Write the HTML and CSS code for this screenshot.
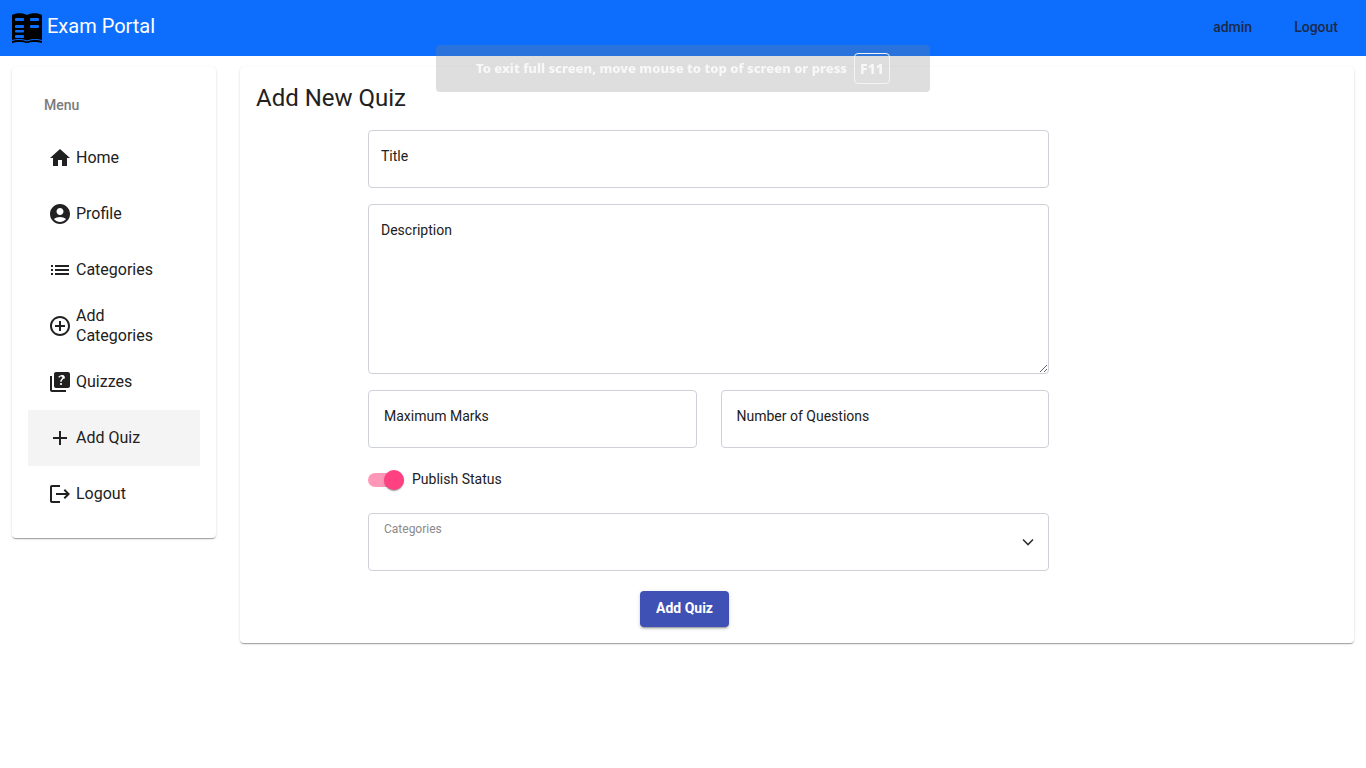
FILE: index.html
```html
<!DOCTYPE html>
<html lang="en">
<head>
    <meta charset="UTF-8">
    <meta name="viewport" content="width=device-width, initial-scale=1.0">
    <title>Exam Portal</title>
    <link rel="stylesheet" href="styles.css">
</head>
<body>
    <header class="navbar">
        <a class="brand" href="#">
            <svg class="brand-logo" viewBox="0 0 30 30" width="30" height="30">
                <path fill="#000" d="M0 2C4 -.5 11 -.5 15 2C19 -.5 26 -.5 30 2V30C26 28.5 19 28.5 15 30C11 28.5 4 28.5 0 30Z"/>
                <path fill="none" stroke="#0d6efd" stroke-width="1" d="M0 27.5C4 26 11 26 15 28C19 26 26 26 30 27.5"/>
                <g fill="#0d6efd">
                    <rect x="3" y="5" width="9" height="3" rx="1"/>
                    <rect x="3" y="12" width="9" height="3" rx="1"/>
                    <rect x="3" y="17" width="9" height="2.5" rx="1"/>
                    <rect x="3" y="22" width="9" height="3" rx="1"/>
                    <rect x="18" y="5" width="9" height="3" rx="1"/>
                    <rect x="18" y="12" width="9" height="3" rx="1"/>
                </g>
            </svg>
            <span class="brand-name">Exam Portal</span>
        </a>
        <nav class="nav-links">
            <a href="#">admin</a>
            <a href="#">Logout</a>
        </nav>
    </header>

    <div class="fullscreen-toast">
        <span class="toast-text">To exit full screen, move mouse to top of screen or press</span>
        <kbd>F11</kbd>
    </div>

    <div class="page">
        <aside class="card sidebar">
            <div class="menu-title">Menu</div>
            <a class="menu-item" href="#">
                <svg class="icon" viewBox="0 0 24 24"><path d="M10 20v-6h4v6h5v-8h3L12 3 2 12h3v8z"/></svg>
                <span>Home</span>
            </a>
            <a class="menu-item" href="#">
                <svg class="icon" viewBox="0 0 24 24"><path d="M12 2C6.48 2 2 6.48 2 12s4.48 10 10 10 10-4.48 10-10S17.52 2 12 2zm0 4c1.93 0 3.5 1.57 3.5 3.5S13.93 13 12 13s-3.5-1.57-3.5-3.5S10.07 6 12 6zm0 14c-2.03 0-4.43-.82-6.14-2.88C7.55 15.8 9.68 15 12 15s4.45.8 6.14 2.12C16.43 19.18 14.03 20 12 20z"/></svg>
                <span>Profile</span>
            </a>
            <a class="menu-item" href="#">
                <svg class="icon" viewBox="0 0 24 24"><path d="M3 13h2v-2H3v2zm0 4h2v-2H3v2zm0-8h2V7H3v2zm4 4h14v-2H7v2zm0 4h14v-2H7v2zM7 7v2h14V7H7z"/></svg>
                <span>Categories</span>
            </a>
            <a class="menu-item" href="#">
                <svg class="icon" viewBox="0 0 24 24"><path d="M13 7h-2v4H7v2h4v4h2v-4h4v-2h-4V7zm-1-5C6.48 2 2 6.48 2 12s4.48 10 10 10 10-4.48 10-10S17.52 2 12 2zm0 18c-4.41 0-8-3.59-8-8s3.59-8 8-8 8 3.59 8 8-3.59 8-8 8z"/></svg>
                <span>Add Categories</span>
            </a>
            <a class="menu-item" href="#">
                <svg class="icon" viewBox="0 0 24 24"><path d="M4 6H2v14c0 1.1.9 2 2 2h14v-2H4V6zm16-4H8c-1.1 0-2 .9-2 2v12c0 1.1.9 2 2 2h12c1.1 0 2-.9 2-2V4c0-1.1-.9-2-2-2zm-7.01 13c-.59 0-1.05-.47-1.05-1.05 0-.59.47-1.04 1.05-1.04.59 0 1.04.45 1.04 1.04 0 .58-.45 1.05-1.04 1.05zm2.5-6.17c-.63.93-1.23 1.21-1.56 1.81-.13.24-.18.4-.18 1.18h-1.52c0-.41-.06-1.08.26-1.65.41-.73 1.18-1.16 1.63-1.8.48-.68.21-1.94-1.14-1.94-.88 0-1.32.67-1.5 1.23l-1.37-.57C11.51 5.96 12.52 5 13.99 5c1.23 0 2.08.56 2.51 1.26.37.61.58 1.73.01 2.57z"/></svg>
                <span>Quizzes</span>
            </a>
            <a class="menu-item active" href="#">
                <svg class="icon" viewBox="0 0 24 24"><path d="M19 13h-6v6h-2v-6H5v-2h6V5h2v6h6v2z"/></svg>
                <span>Add Quiz</span>
            </a>
            <a class="menu-item" href="#">
                <svg class="icon" viewBox="0 0 24 24"><path d="M17 7l-1.41 1.41L18.17 11H8v2h10.17l-2.58 2.58L17 17l5-5zM4 5h8V3H4c-1.1 0-2 .9-2 2v14c0 1.1.9 2 2 2h8v-2H4V5z"/></svg>
                <span>Logout</span>
            </a>
        </aside>

        <main class="card content">
            <h1 class="page-title">Add New Quiz</h1>
            <form class="quiz-form">
                <input class="field title-field" type="text" placeholder="Title">
                <textarea class="field description-field" placeholder="Description"></textarea>
                <div class="field-row">
                    <input class="field number-field" type="text" placeholder="Maximum Marks">
                    <input class="field number-field" type="text" placeholder="Number of Questions">
                </div>
                <label class="toggle">
                    <span class="toggle-track"><span class="toggle-thumb"></span></span>
                    <span>Publish Status</span>
                </label>
                <div class="field select-field">
                    <span class="select-label">Categories</span>
                    <svg class="select-arrow" viewBox="0 0 12 8" width="12" height="8"><path d="M1 1.5l5 5 5-5" fill="none" stroke="#333" stroke-width="1.6"/></svg>
                </div>
                <button class="submit-btn" type="button">Add Quiz</button>
            </form>
        </main>
    </div>
</body>
</html>
```

FILE: styles.css
```css
* {
    box-sizing: border-box;
}

body {
    margin: 0;
    background-color: #fff;
    color: #212121;
    font-family: Roboto, "Liberation Sans", sans-serif;
}

a {
    color: inherit;
    text-decoration: none;
}

.navbar {
    display: flex;
    justify-content: space-between;
    align-items: center;
    height: 56px;
    padding: 0 12px;
    background-color: #0d6efd;
}

.brand {
    display: flex;
    align-items: center;
    gap: 5px;
    color: #fff;
    font-size: 20px;
}

.brand-logo {
    display: block;
}

.brand-name {
    padding-bottom: 4px;
}

.nav-links {
    display: flex;
    gap: 42px;
    padding-right: 16px;
    padding-bottom: 2px;
    color: #1c2a4a;
    font-size: 14px;
    font-weight: 500;
}

.fullscreen-toast {
    position: fixed;
    top: 45px;
    left: 436px;
    display: flex;
    justify-content: center;
    align-items: center;
    gap: 7px;
    width: 494px;
    height: 47px;
    border-radius: 4px;
    background-color: rgba(128, 128, 128, 0.26);
    color: #f8f8f8;
    font-family: "Noto Sans", sans-serif;
    font-size: 13.07px;
    font-weight: 800;
}

.toast-text {
    padding-bottom: 2px;
}

.fullscreen-toast kbd {
    display: flex;
    justify-content: center;
    align-items: center;
    width: 36px;
    height: 31px;
    border: 1px solid #f4f4f4;
    border-radius: 4px;
    font-family: inherit;
    font-size: 14px;
}

.page {
    display: grid;
    grid-template-columns: 204px 1114px;
    gap: 24px;
    align-items: start;
    padding: 11px 12px 40px;
}

.card {
    border-radius: 4px;
    background-color: #fff;
    box-shadow: 0 2px 1px -1px rgba(0, 0, 0, 0.2), 0 1px 1px rgba(0, 0, 0, 0.14), 0 1px 3px rgba(0, 0, 0, 0.12);
}

.sidebar {
    padding: 16px;
}

.menu-title {
    height: 47px;
    padding: 15px 16px 0;
    color: #7b7b7b;
    font-size: 14px;
    font-weight: 500;
    line-height: 14px;
}

.menu-item {
    display: flex;
    align-items: center;
    gap: 4px;
    height: 56px;
    padding: 0 20px;
    font-size: 16px;
    line-height: 20px;
}

.menu-item.active {
    background-color: #f4f4f4;
}

.icon {
    flex: none;
    width: 24px;
    height: 24px;
    fill: #212121;
}

.content {
    height: 576px;
    padding: 16px;
}

.page-title {
    margin: 0 0 17px;
    font-size: 24px;
    font-weight: 400;
    line-height: 30px;
}

.quiz-form {
    display: flex;
    flex-direction: column;
    gap: 16px;
    width: 681px;
    margin-left: 112px;
}

.field {
    display: block;
    width: 100%;
    border: 1px solid #ced1d8;
    border-radius: 4px;
    background-color: #fff;
    color: #212121;
    font-family: inherit;
    font-size: 14px;
    outline: none;
}

.field::placeholder {
    color: #212121;
    opacity: 1;
}

.title-field {
    height: 58px;
    padding: 0 12px 6px;
}

.description-field {
    height: 170px;
    padding: 17px 12px 0;
}

.field-row {
    display: flex;
    gap: 24px;
}

.number-field {
    height: 58px;
    padding: 0 15px 6px;
}

.toggle {
    display: flex;
    align-items: center;
    gap: 8px;
    height: 48px;
    margin: -9px 0 -6px;
    font-size: 14px;
}

.toggle-track {
    position: relative;
    width: 36px;
    height: 14px;
    margin-top: 2px;
    border-radius: 7px;
    background-color: #ff97b9;
}

.toggle-thumb {
    position: absolute;
    top: -3px;
    right: 0;
    width: 20px;
    height: 20px;
    border-radius: 50%;
    background-color: #ff4081;
    box-shadow: 0 2px 1px -1px rgba(0, 0, 0, 0.2), 0 1px 1px rgba(0, 0, 0, 0.14), 0 1px 3px rgba(0, 0, 0, 0.12);
}

.select-field {
    display: flex;
    justify-content: space-between;
    align-items: center;
    height: 58px;
    padding: 0 14px 0 15px;
}

.select-label {
    align-self: flex-start;
    margin-top: 8px;
    color: #8a8a8a;
    font-size: 12px;
    line-height: 14px;
}

.select-arrow {
    display: block;
}

.submit-btn {
    width: 89px;
    height: 36px;
    margin: 4px 0 0 272px;
    padding: 0 0 2px;
    border: none;
    border-radius: 4px;
    background-color: #3f51b5;
    color: #fff;
    font-family: inherit;
    font-size: 14px;
    font-weight: 700;
    box-shadow: 0 3px 1px -2px rgba(0, 0, 0, 0.2), 0 2px 2px rgba(0, 0, 0, 0.14), 0 1px 5px rgba(0, 0, 0, 0.12);
}
```
